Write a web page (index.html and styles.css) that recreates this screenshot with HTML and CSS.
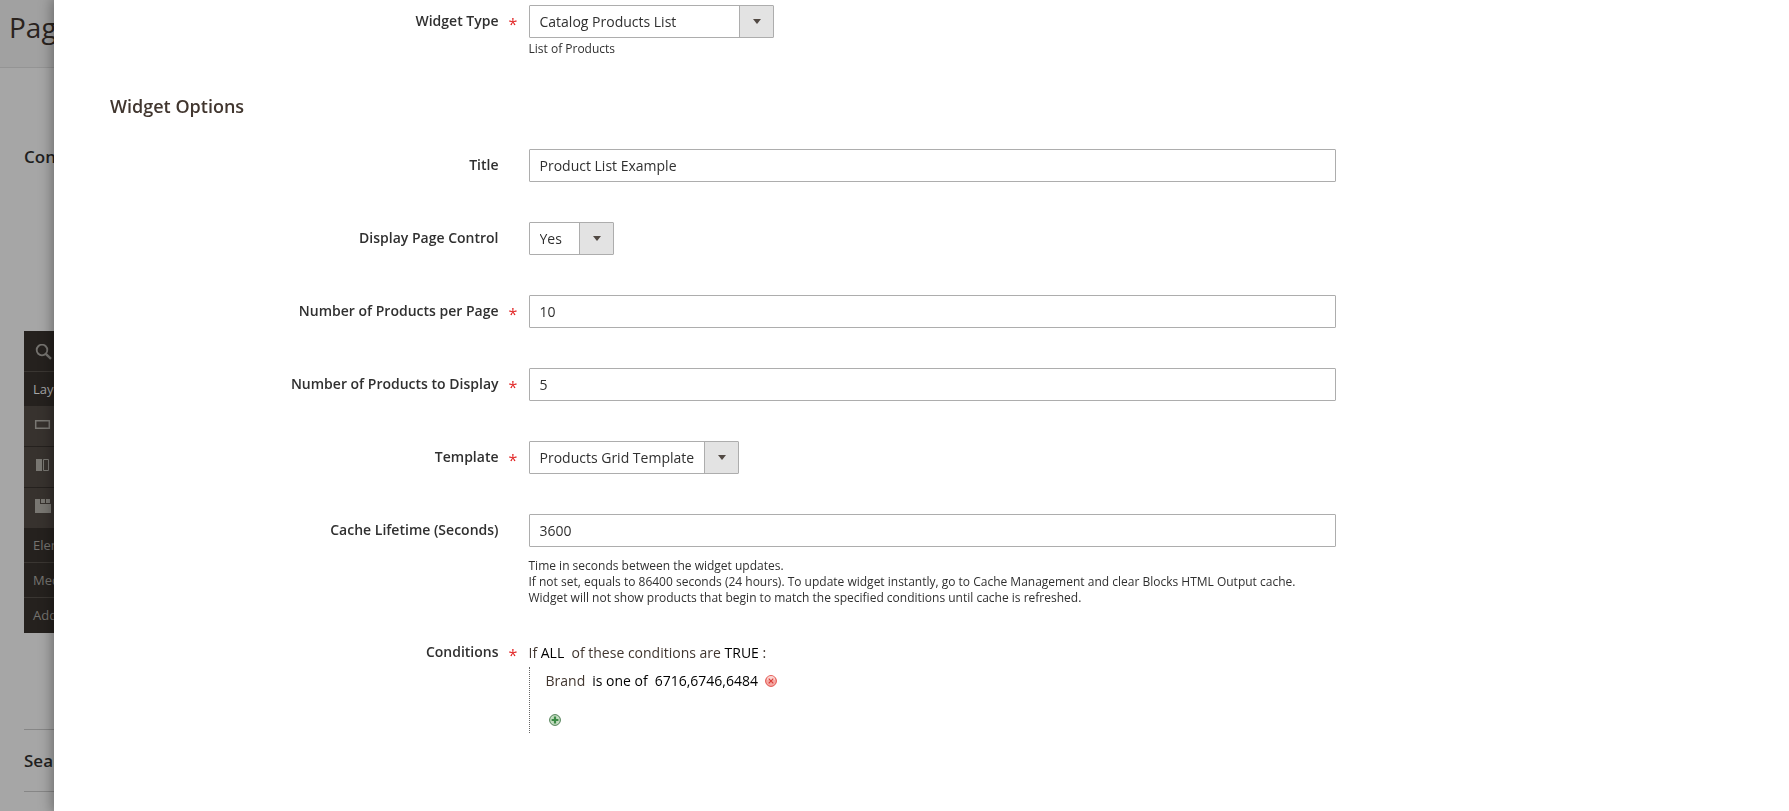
FILE: index.html
```
<!DOCTYPE html>
<html lang="en">
	<head>
		<meta charset="utf-8">
		<title>Insert Widget</title>
		<link rel="stylesheet" href="styles.css">
	</head>
	<body>
		<!-- page behind the modal -->
		<div class="page">
			<header class="page-header">
				<h1>Pages</h1>
			</header>
			<div class="page-content">
				<h2 class="section-title">Content</h2>
				<nav class="builder">
					<div class="search">
						<svg width="17" height="17" viewBox="0 0 17 17"><circle cx="7" cy="6" r="5.3" fill="none" stroke="#75736f" stroke-width="1.8"/><path d="M10.8 9.8l5.2 5" stroke="#75736f" stroke-width="2.4"/></svg>
					</div>
					<h4 class="active">Layout</h4>
					<div class="item">
						<svg width="17" height="15" viewBox="0 0 17 15"><path d="M1.7 3.7h13.6v7.6h-13.6z" fill="none" stroke="#797772" stroke-width="1.5"/></svg>
					</div>
					<div class="item">
						<svg width="17" height="15" viewBox="0 0 17 15"><path d="M2 1h6v12H2z" fill="#797772"/><path d="M9.5 1.5h5v11h-5z" fill="none" stroke="#797772"/></svg>
					</div>
					<div class="item">
						<svg width="17" height="15" viewBox="0 0 17 15"><path d="M1 0h5v5h11v9H1zM7 0h4v4H7zM12 0h4v4h-4z" fill="#797772"/></svg>
					</div>
					<h4>Elements</h4>
					<h4>Media</h4>
					<h4>Add Content</h4>
				</nav>
				<h2 class="section-bar">Search Engine Optimization</h2>
			</div>
		</div>

		<!-- modal -->
		<div class="modal">
			<form action="" method="">
				<div class="field">
					<label for="type">Widget Type<span class="star">*</span></label>
					<div class="control">
						<span class="select wide">
							<select id="type"><option>Catalog Products List</option></select>
						</span>
						<p class="note type-note">List of Products</p>
					</div>
				</div>

				<h2 class="legend">Widget Options</h2>

				<div class="field">
					<label for="title">Title<span class="star"></span></label>
					<div class="control">
						<input type="text" id="title" value="Product List Example">
					</div>
				</div>
				<div class="field">
					<label for="pager">Display Page Control<span class="star"></span></label>
					<div class="control">
						<span class="select small">
							<select id="pager"><option>Yes</option></select>
						</span>
					</div>
				</div>
				<div class="field">
					<label for="perPage">Number of Products per Page<span class="star">*</span></label>
					<div class="control">
						<input type="text" id="perPage" value="10">
					</div>
				</div>
				<div class="field">
					<label for="count">Number of Products to Display<span class="star">*</span></label>
					<div class="control">
						<input type="text" id="count" value="5">
					</div>
				</div>
				<div class="field">
					<label for="template">Template<span class="star">*</span></label>
					<div class="control">
						<span class="select medium">
							<select id="template"><option>Products Grid Template</option></select>
						</span>
					</div>
				</div>
				<div class="field cache">
					<label for="cache">Cache Lifetime (Seconds)<span class="star"></span></label>
					<div class="control">
						<input type="text" id="cache" value="3600">
						<p class="note cache-note">Time in seconds between the widget updates.<br>If not set, equals to 86400 seconds (24 hours). To update widget instantly, go to Cache Management and clear Blocks HTML Output cache.<br>Widget will not show products that begin to match the specified conditions until cache is refreshed.</p>
					</div>
				</div>
				<div class="field">
					<div class="label">Conditions<span class="star">*</span></div>
					<div class="control rule">
						<p>If <a href="##">ALL</a>&nbsp; of these conditions are <a href="##">TRUE</a> :</p>
						<ul>
							<li>
								<span>Brand</span>
								<a href="##">is one of</a>
								<a href="##">6716,6746,6484</a>
								<button type="button" aria-label="Remove">
									<svg width="12" height="12" viewBox="0 0 12 12"><circle cx="6" cy="6" r="5.4" fill="#f5aaa5" stroke="#e2504a"/><path d="M2 5a4 4 0 0 1 8 0z" fill="#fbd5d2"/><path d="M3.7 3.7l4.6 4.6M8.3 3.7L3.7 8.3" stroke="#d93c36" stroke-width="1.2"/></svg>
								</button>
							</li>
							<li class="add">
								<button type="button" aria-label="Add">
									<svg width="12" height="12" viewBox="0 0 12 12"><circle cx="6" cy="6" r="5.4" fill="#c3dcc0" stroke="#4f7f55"/><path d="M6 2.6v6.8M2.6 6h6.8" stroke="#3b8a45" stroke-width="2.2"/></svg>
								</button>
							</li>
						</ul>
					</div>
				</div>
			</form>
		</div>
	</body>
</html>
```
FILE: styles.css
```
*{
	margin: 0;
	padding: 0;
	box-sizing: border-box;
}
body{
	font-family: "Open Sans", "Noto Sans", sans-serif;
	font-size: 14px;
	line-height: 20px;
	color: #41362f;
	background-color: #a6a6a6;
	overflow: hidden;
}
svg{
	display: block;
}
/* page behind */
.page-header{
	height: 68px;
	padding: 7px 9px;
	background-color: #a1a1a1;
	border-bottom: 1px solid #949494;
}
.page-header h1{
	font-size: 28px;
	line-height: 40px;
	font-weight: 400;
	color: #2a231e;
}
.page-content{
	padding-left: 24px;
}
.section-title,.section-bar{
	font-size: 17px;
	line-height: 24px;
	font-weight: 600;
	color: #1f1f1f;
	white-space: nowrap;
}
.section-title{
	padding: 77px 0 150px;
}
.section-bar{
	margin-top: 96px;
	padding: 19px 0 18px;
	border-top: 1px solid #868686;
	border-bottom: 1px solid #868686;
}
.builder{
	margin-top: 12px;
	background-color: #25211e;
	color: #75736f;
}
.search{
	height: 41px;
	padding: 13px 11px;
	border-bottom: 1px solid #3a3632;
}
.builder h4{
	height: 35px;
	padding-left: 9px;
	font-size: 13px;
	line-height: 35px;
	font-weight: 400;
	border-bottom: 1px solid #3a3632;
	white-space: nowrap;
}
.builder .active{
	height: 34px;
	line-height: 34px;
	color: #a6a6a6;
	border-bottom: 0;
}
.builder h4:last-child{
	border-bottom: 0;
}
.item{
	height: 40px;
	padding: 11px 10px;
	background-color: #37322e;
}
.item + .item{
	height: 41px;
	border-top: 1px solid #25211e;
}
/* modal */
.modal{
	position: fixed;
	top: 0;
	right: 0;
	bottom: 0;
	left: 54px;
	padding: 5px 5px 0 56px;
	background-color: #fff;
	box-shadow: 0 0 12px 2px rgba(0,0,0,.35);
	overflow: hidden;
}
.field{
	display: grid;
	grid-template-columns: 1fr 2fr 1fr;
	margin-bottom: 40px;
}
.cache{
	margin-bottom: 30px;
}
.field label,.label{
	display: flex;
	justify-content: flex-end;
	height: 32px;
	line-height: 32px;
	font-weight: 600;
	color: #303030;
}
.star{
	width: 30px;
	padding: 3px 0 0 10px;
	font-size: 16px;
	font-weight: 400;
	color: #e22626;
}
.control{
	min-width: 0;
	padding-right: 30px;
}
input,select{
	display: block;
	width: 100%;
	height: 33px;
	padding: 0 10px;
	font-family: inherit;
	font-size: 14px;
	color: #303030;
	background-color: #fff;
	border: 1px solid #adadad;
	border-radius: 1px;
}
select{
	appearance: none;
}
.select{
	display: block;
	position: relative;
}
.wide{
	width: 245px;
}
.small{
	width: 85px;
}
.medium{
	width: 210px;
}
.select::before{
	content: "";
	position: absolute;
	top: 1px;
	right: 1px;
	bottom: 1px;
	width: 33px;
	background-color: #e3e3e3;
	border-left: 1px solid #adadad;
	pointer-events: none;
}
/* arrow */
.select::after{
	content: "";
	position: absolute;
	top: 14px;
	right: 13px;
	border: 4px solid transparent;
	border-top: 5px solid #514943;
	border-bottom: 0;
	pointer-events: none;
}
.note{
	font-size: 12px;
	line-height: 16px;
	color: #303030;
}
.type-note{
	margin-top: 3px;
}
.cache-note{
	margin-top: 11px;
}
.legend{
	margin: -3px 0 31px;
	font-size: 18px;
	line-height: 24px;
	font-weight: 600;
}
.rule{
	padding-top: 7px;
}
.rule a{
	color: #000;
	text-decoration: none;
}
.rule ul{
	margin-top: 4px;
	padding: 4px 0 7px 16px;
	border-left: 1px dotted #666;
	list-style: none;
}
.rule li{
	display: flex;
	align-items: center;
	gap: 7px;
}
.rule .add{
	padding: 23px 3px 0;
}
.rule button{
	border: 0;
	background: none;
	cursor: pointer;
}
```
